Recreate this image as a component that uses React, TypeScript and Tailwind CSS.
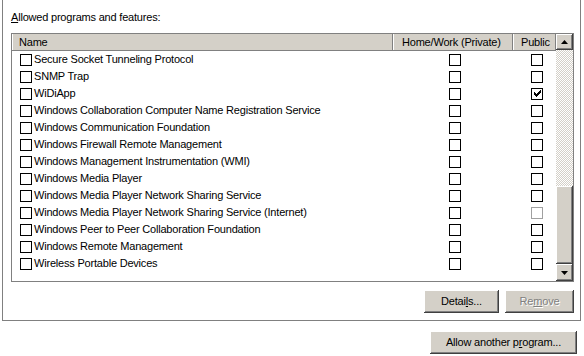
import React from 'react';

const rows: { name: string; pub?: boolean; pubDisabled?: boolean }[] = [
  { name: 'Secure Socket Tunneling Protocol' },
  { name: 'SNMP Trap' },
  { name: 'WiDiApp', pub: true },
  { name: 'Windows Collaboration Computer Name Registration Service' },
  { name: 'Windows Communication Foundation' },
  { name: 'Windows Firewall Remote Management' },
  { name: 'Windows Management Instrumentation (WMI)' },
  { name: 'Windows Media Player' },
  { name: 'Windows Media Player Network Sharing Service' },
  { name: 'Windows Media Player Network Sharing Service (Internet)', pubDisabled: true },
  { name: 'Windows Peer to Peer Collaboration Foundation' },
  { name: 'Windows Remote Management' },
  { name: 'Wireless Portable Devices' },
];

const raised =
  'bg-[#d4d0c8] shadow-[inset_-1px_-1px_#404040,inset_1px_1px_#ffffff,inset_-2px_-2px_#808080,inset_2px_2px_#d4d0c8]';

const Check = ({ checked = false, disabled = false }: { checked?: boolean; disabled?: boolean }) => (
  <span
    className={`w-[12px] h-[12px] shrink-0 border bg-white flex items-center justify-center ${
      disabled ? 'border-[#a0a0a0]' : 'border-black'
    }`}
  >
    {checked && (
      <svg width="7" height="7" viewBox="0 0 7 7" shapeRendering="crispEdges">
        <polygon points="0,2 2,4 7,-1 7,2 2,7 0,5" fill="black" />
      </svg>
    )}
  </span>
);

const Arrow = ({ down = false }: { down?: boolean }) => (
  <svg width="7" height="4" viewBox="0 0 7 4">
    <path d={down ? 'M0 0 H7 L3.5 4 Z' : 'M0 4 H7 L3.5 0 Z'} fill="black" />
  </svg>
);

const Button = ({ children, w, disabled = false }: { children: React.ReactNode; w: string; disabled?: boolean }) => (
  <div
    className={`${raised} ${w} h-[23px] flex items-center justify-center ${
      disabled ? 'text-[#808080] [text-shadow:1px_1px_#ffffff]' : 'text-black'
    }`}
  >
    {children}
  </div>
);

export default function App() {
  return (
    <div className="w-[584px] h-[356px] bg-white overflow-hidden font-['Liberation_Sans',Arial,sans-serif] text-[11px] tracking-[-0.2px] text-black">
      <div className="ml-[2px] w-[579px] h-[321px] border-x border-b border-[#808080] pt-[11px]">
        <div className="ml-[8px] leading-[13px]">
          <span className="underline">A</span>llowed programs and features:
        </div>
        <div className="ml-[8px] mt-[9px] w-[563px] h-[249px] border border-[#808080] flex">
          <div className="w-[544px] flex flex-col">
            <div className="h-[17px] flex bg-[#d4d0c8] border-b border-[#808080] leading-[16px]">
              <div className="w-[381px] pl-[6px] border-l border-white border-r border-r-[#808080]">Name</div>
              <div className="w-[120px] pl-[8px] border-l border-white border-r border-r-[#808080]">Home/Work (Private)</div>
              <div className="w-[43px] pl-[7px] border-l border-white border-r border-r-[#808080]">Public</div>
            </div>
            {rows.map((r) => (
              <div key={r.name} className="h-[17px] flex items-center">
                <div className="w-[381px] pl-[8px] flex items-center gap-[2px] whitespace-nowrap">
                  <Check />
                  <span>{r.name}</span>
                </div>
                <div className="w-[120px] pl-[56px] flex items-center">
                  <Check />
                </div>
                <div className="w-[43px] pl-[18px] flex items-center">
                  <Check checked={r.pub} disabled={r.pubDisabled} />
                </div>
              </div>
            ))}
          </div>
          <div className="w-[17px] flex flex-col">
            <div className={`${raised} h-[16px] flex items-center justify-center`}>
              <Arrow />
            </div>
            <div className="h-[136px] bg-[repeating-conic-gradient(#d4d0c8_0%_25%,#ffffff_0%_50%)] bg-size-[2px_2px]" />
            <div className={`${raised} h-[78px]`} />
            <div className={`${raised} flex-1 flex items-center justify-center`}>
              <Arrow down />
            </div>
          </div>
        </div>
        <div className="flex justify-end gap-[6px] mr-[6px] mt-[8px]">
          <Button w="w-[75px]">
            <span>
              Detai<span className="underline">l</span>s...
            </span>
          </Button>
          <Button w="w-[69px]" disabled>
            <span>
              Re<span className="underline">m</span>ove
            </span>
          </Button>
        </div>
      </div>
      <div className="flex justify-end mr-[7px] mt-[10px]">
        <Button w="w-[147px]">
          <span>
            Allow another p<span className="underline">r</span>ogram...
          </span>
        </Button>
      </div>
    </div>
  );
}
